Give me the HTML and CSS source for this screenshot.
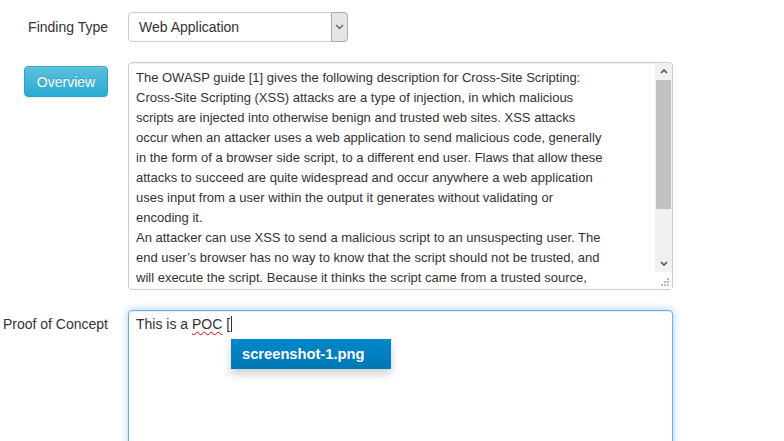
FILE: index.html
```html
<!DOCTYPE html>
<html lang="en">
<head>
  <meta charset="UTF-8">
  <meta name="viewport" content="width=device-width, initial-scale=1.0">
  <title>Edit Finding</title>
  <link rel="stylesheet" href="styles.css">
</head>
<body>
  <form class="finding-form">
    <div class="form-row row-type">
      <label class="row-label" for="findingType">Finding Type</label>
      <div class="select-wrap">
        <select id="findingType" class="type-select">
          <option>Web Application</option>
        </select>
        <span class="select-arrow">
          <svg width="9" height="6" viewBox="0 0 9 6"><path d="M1 1 L4.5 4.5 L8 1" fill="none" stroke="#555" stroke-width="1.1"/></svg>
        </span>
      </div>
    </div>

    <div class="form-row">
      <div class="row-label">
        <button type="button" class="btn-info">Overview</button>
      </div>
      <div class="text-box overview-box">
        <div class="text-content">
          The OWASP guide [1] gives the following description for Cross-Site Scripting:<br>
          Cross-Site Scripting (XSS) attacks are a type of injection, in which malicious<br>
          scripts are injected into otherwise benign and trusted web sites. XSS attacks<br>
          occur when an attacker uses a web application to send malicious code, generally<br>
          in the form of a browser side script, to a different end user. Flaws that allow these<br>
          attacks to succeed are quite widespread and occur anywhere a web application<br>
          uses input from a user within the output it generates without validating or<br>
          encoding it.<br>
          An attacker can use XSS to send a malicious script to an unsuspecting user. The<br>
          end user’s browser has no way to know that the script should not be trusted, and<br>
          will execute the script. Because it thinks the script came from a trusted source,
        </div>
        <div class="scrollbar">
          <div class="sb-button">
            <svg width="8" height="5" viewBox="0 0 8 5"><path d="M1 4 L4 1 L7 4" fill="none" stroke="#505050" stroke-width="1.6"/></svg>
          </div>
          <div class="sb-thumb"></div>
          <div class="sb-track"></div>
          <div class="sb-button">
            <svg width="8" height="5" viewBox="0 0 8 5"><path d="M1 1 L4 4 L7 1" fill="none" stroke="#505050" stroke-width="1.6"/></svg>
          </div>
          <div class="sb-corner">
            <svg width="8" height="8" viewBox="0 0 8 8" fill="#bbb">
              <rect x="6" y="0" width="2" height="2"/>
              <rect x="3" y="3" width="2" height="2"/><rect x="6" y="3" width="2" height="2"/>
              <rect x="0" y="6" width="2" height="2"/><rect x="3" y="6" width="2" height="2"/><rect x="6" y="6" width="2" height="2"/>
            </svg>
          </div>
        </div>
      </div>
    </div>

    <div class="form-row">
      <label class="row-label label-top">Proof of Concept</label>
      <div class="text-box poc-box">
        <div class="text-content">This is a <span class="misspelled">POC</span> [<span class="caret"></span></div>
        <ul class="suggest-menu">
          <li class="active">screenshot-1.png</li>
        </ul>
      </div>
    </div>
  </form>
</body>
</html>
```

FILE: styles.css
```css
body {
  margin: 0;
  font-family: "Liberation Sans", Arial, sans-serif;
  font-size: 14px;
  line-height: 20px;
  color: #333;
  background: #fff;
}
.finding-form {
  padding-top: 12px;
}
.form-row {
  display: grid;
  grid-template-columns: 108px 545px;
  column-gap: 20px;
  margin-bottom: 20px;
}
.row-type {
  align-items: center;
}
.row-label {
  text-align: right;
}
.label-top {
  padding-top: 4px;
}

/* select */
.select-wrap {
  position: relative;
  width: 220px;
  height: 30px;
}
.type-select {
  appearance: none;
  -webkit-appearance: none;
  width: 100%;
  height: 30px;
  padding: 0 20px 0 10px;
  border: 1px solid #ccc;
  border-radius: 4px;
  background: #fff;
  font-family: inherit;
  font-size: 14px;
  color: #333;
}
.select-arrow {
  position: absolute;
  top: 0;
  right: 0;
  width: 17px;
  height: 30px;
  box-sizing: border-box;
  border: 1px solid #acacac;
  border-radius: 0 4px 4px 0;
  background: #e5e5e5;
  display: flex;
  align-items: center;
  justify-content: center;
  pointer-events: none;
}

/* overview button */
.btn-info {
  margin-top: 4px;
  width: 84px;
  height: 31px;
  border: 1px solid #28a4c9;
  border-radius: 4px;
  background: linear-gradient(to bottom, #5bc0de 0%, #2aabd2 100%);
  color: #fff;
  font-family: inherit;
  font-size: 14px;
  text-shadow: 0 -1px 0 rgba(0, 0, 0, 0.2);
  box-shadow: inset 0 1px 0 rgba(255, 255, 255, 0.15), 0 1px 1px rgba(0, 0, 0, 0.075);
  cursor: pointer;
}

/* text boxes */
.text-box {
  position: relative;
  display: flex;
  border: 1px solid #ccc;
  border-radius: 4px;
  background: #fff;
  box-shadow: inset 0 1px 1px rgba(0, 0, 0, 0.075);
}
.text-content {
  flex: 1;
  overflow: hidden;
}
.overview-box {
  height: 228px;
  box-sizing: border-box;
}
.overview-box .text-content {
  padding: 5px 10px 0 7px;
  font-size: 13px;
  white-space: nowrap;
}
.poc-box {
  height: 160px;
  border-color: #66afe9;
  box-shadow: inset 0 1px 1px rgba(0, 0, 0, 0.075), 0 0 8px rgba(102, 175, 233, 0.6);
}
.poc-box .text-content {
  padding: 3px 7px;
}
.misspelled {
  text-decoration: underline wavy #e00;
  text-decoration-thickness: 1px;
  text-decoration-skip-ink: none;
  text-underline-offset: 2px;
}
.caret {
  display: inline-block;
  width: 1px;
  height: 16px;
  margin-left: 1px;
  vertical-align: -3px;
  background: #333;
}

/* fake scrollbar */
.scrollbar {
  width: 17px;
  display: flex;
  flex-direction: column;
  background: #f1f1f1;
  border-radius: 0 3px 3px 0;
}
.sb-button {
  height: 17px;
  display: flex;
  align-items: center;
  justify-content: center;
}
.sb-thumb {
  height: 129px;
  margin: 0 1px;
  background: #c1c1c1;
}
.sb-track {
  flex: 1;
}
.sb-corner {
  height: 17px;
  background: #fff;
  display: flex;
  align-items: flex-end;
  justify-content: flex-end;
  padding: 0 3px 3px 0;
  box-sizing: border-box;
}

/* mention menu */
.suggest-menu {
  position: absolute;
  top: 28px;
  left: 102px;
  margin: 0;
  padding: 0;
  list-style: none;
  width: 160px;
  box-shadow: 0 5px 10px rgba(0, 0, 0, 0.2);
}
.suggest-menu li {
  height: 30px;
  line-height: 30px;
  padding-left: 11px;
  font-size: 14.7px;
  font-weight: bold;
  color: #fff;
}
.suggest-menu li.active {
  background: linear-gradient(to bottom, #0088cc 0%, #0077b3 100%);
}
```
